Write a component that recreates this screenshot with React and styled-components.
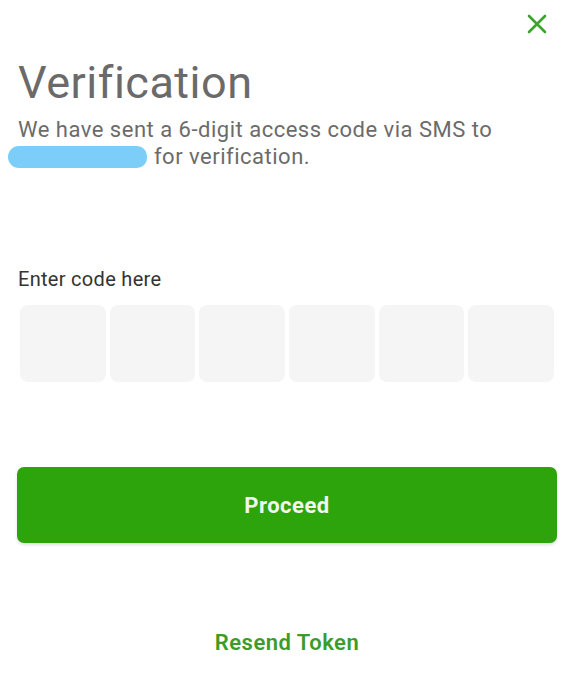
import React from 'react';
import styled, { createGlobalStyle } from 'styled-components';

const GlobalStyle = createGlobalStyle`
  html, body {
    margin: 0;
    padding: 0;
    background: #fff;
  }
  body {
    font-family: Roboto, "Noto Sans", "Liberation Sans", sans-serif;
  }
`;

const Page = styled.div`
  width: 574px;
  min-height: 676px;
  box-sizing: border-box;
  padding: 14px 18px 0;
  display: flex;
  flex-direction: column;
`;

const TopBar = styled.div`
  display: flex;
  justify-content: flex-end;
  height: 20px;
  padding-right: 9px;
`;

const CloseButton = styled.button`
  border: 0;
  background: none;
  padding: 0;
  width: 20px;
  height: 20px;
  cursor: pointer;
  display: flex;
  > svg {
    display: block;
  }
`;

const Title = styled.h1`
  margin: 27px 0 0;
  font-size: 45px;
  line-height: 44px;
  font-weight: 400;
  letter-spacing: 0.5px;
  color: #6a6a6a;
`;

const Lead = styled.p`
  margin: 11px 0 0;
  font-size: 22px;
  line-height: 27px;
  letter-spacing: 0.5px;
  color: #6b6b6b;
`;

const Masked = styled.span`
  display: inline-block;
  vertical-align: -4px;
  width: 139px;
  height: 22px;
  margin-left: -10px;
  margin-right: 1px;
  border-radius: 11px 10px 10px 11px;
  background: #7dcdf9;
`;

const Label = styled.label`
  display: block;
  margin-top: 97px;
  font-size: 20px;
  line-height: 24px;
  letter-spacing: 0.3px;
  color: #333;
`;

const CodeRow = styled.div`
  display: grid;
  grid-template-columns: repeat(6, 1fr);
  gap: 4px;
  margin: 14px 2px 0;
`;

const CodeBox = styled.input`
  box-sizing: border-box;
  width: 100%;
  height: 77px;
  border: 0;
  border-radius: 8px;
  background: #f5f5f5;
  font-family: inherit;
  font-size: 28px;
  text-align: center;
  color: #333;
  outline: none;
`;

const Proceed = styled.button`
  margin: 85px -1px 0;
  height: 76px;
  border: 0;
  border-radius: 7px;
  background: #2da40c;
  box-shadow: 0 2px 3px rgba(0, 0, 0, 0.12);
  color: #f2f7ee;
  font-family: inherit;
  font-size: 22px;
  font-weight: 700;
  letter-spacing: 0.5px;
  display: flex;
  align-items: center;
  justify-content: center;
  cursor: pointer;
`;

const Resend = styled.a`
  margin-top: 87px;
  align-self: center;
  font-size: 22px;
  line-height: 26px;
  font-weight: 600;
  letter-spacing: 0.5px;
  color: #3b9c2b;
  text-decoration: none;
  cursor: pointer;
`;

const CloseIcon = () => (
  <svg width="20" height="20" viewBox="0 0 20 20" fill="none">
    <path d="M2 2 L18 18 M18 2 L2 18" stroke="#3aa52a" strokeWidth="2.6" strokeLinecap="round" />
  </svg>
);

export default function App() {
  const digits = [0, 1, 2, 3, 4, 5];
  return (
    <>
      <GlobalStyle />
      <Page>
        <TopBar>
          <CloseButton aria-label="Close"><CloseIcon /></CloseButton>
        </TopBar>
        <Title>Verification</Title>
        <Lead>
          We have sent a 6-digit access code via SMS to
          <br />
          <Masked /> for verification.
        </Lead>
        <Label>Enter code here</Label>
        <CodeRow>
          {digits.map(d => <CodeBox key={d} maxLength={1} inputMode="numeric" />)}
        </CodeRow>
        <Proceed>Proceed</Proceed>
        <Resend>Resend Token</Resend>
      </Page>
    </>
  );
}
